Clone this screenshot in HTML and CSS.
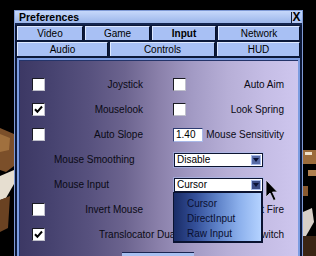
FILE: index.html
```html
<!DOCTYPE html>
<html>
<head>
<meta charset="utf-8">
<link rel="stylesheet" href="styles.css">
</head>
<body>
<svg class="backdrop" width="316" height="256" viewBox="0 0 316 256">
  <path d="M0 128 L14 134 L14 166 L6 172 L0 170 Z" fill="#7b4f2a"/>
  <path d="M0 134 L10 138 L9 150 L0 152 Z" fill="#a0703e"/>
  <path d="M0 176 L14 170 L14 184 L6 198 L0 200 Z" fill="#e6ded0"/>
  <path d="M0 200 L10 196 L8 228 L0 232 Z" fill="#6a4222"/>
  <rect x="303" y="150" width="13" height="14" fill="#9c6c3c"/>
  <rect x="305" y="152" width="7" height="3" fill="#f0e0c8"/>
  <rect x="308" y="170" width="8" height="6" fill="#b08050"/>
  <rect x="303" y="186" width="5" height="10" fill="#8a5a30"/>
  <path d="M303 212 L312 208 L314 222 L306 236 L303 236 Z" fill="#d8d0c8"/>
  <rect x="303" y="236" width="13" height="20" fill="#3a2414"/>
</svg>

<div class="window">
  <div class="titlebar">
    <span class="title">Preferences</span>
    <span class="close">X</span>
  </div>
  <div class="tabbody">
    <div class="tabs">
      <div class="tab tab-video">Video</div>
      <div class="tab tab-game">Game</div>
      <div class="tab tab-input active">Input</div>
      <div class="tab tab-network">Network</div>
    </div>
    <div class="tabs">
      <div class="tab tab-audio">Audio</div>
      <div class="tab tab-controls">Controls</div>
      <div class="tab tab-hud">HUD</div>
    </div>
    <div class="panel">
      <div class="row">
        <div class="half"><span class="check"></span><span class="label">Joystick</span></div>
        <div class="half"><span class="check"></span><span class="label">Auto Aim</span></div>
      </div>
      <div class="row">
        <div class="half"><span class="check"><svg class="tick" width="9" height="9" viewBox="0 0 9 9"><path d="M1 4.2 L3.4 6.8 L8 1.5" fill="none" stroke="#000" stroke-width="2"/></svg></span><span class="label">Mouselook</span></div>
        <div class="half"><span class="check"></span><span class="label">Look Spring</span></div>
      </div>
      <div class="row">
        <div class="half"><span class="check"></span><span class="label">Auto Slope</span></div>
        <div class="half"><span class="num">1.40</span><span class="label">Mouse Sensitivity</span></div>
      </div>
      <div class="row select-row">
        <span class="select-label">Mouse Smoothing</span>
        <div class="select"><span>Disable</span><span class="arrow"></span></div>
      </div>
      <div class="row select-row">
        <span class="select-label">Mouse Input</span>
        <div class="select open"><span>Cursor</span><span class="arrow"></span>
          <div class="options">
            <div class="option">Cursor</div>
            <div class="option">DirectInput</div>
            <div class="option">Raw Input</div>
          </div>
        </div>
      </div>
      <div class="row">
        <div class="half"><span class="check"></span><span class="label">Invert Mouse</span></div>
        <div class="half"><span class="check"></span><span class="label">Alt Fire</span></div>
      </div>
      <div class="row">
        <div class="half"><span class="check"><svg class="tick" width="9" height="9" viewBox="0 0 9 9"><path d="M1 4.2 L3.4 6.8 L8 1.5" fill="none" stroke="#000" stroke-width="2"/></svg></span><span class="label label-long">Translocator Dual</span></div>
        <div class="half"><span class="check"></span><span class="label">Switch</span></div>
      </div>
      <div class="button"></div>
    </div>
  </div>
</div>

<svg class="pointer" width="14" height="23" viewBox="0 0 14 23">
  <path d="M1 1 V18 L5 14 L8.5 21.5 L11 20.5 L7.5 13 H12.5 Z" fill="#000" stroke="#d8d4f0" stroke-width="0.8"/>
</svg>
</body>
</html>
```

FILE: styles.css
```css
html, body {
  margin: 0;
  padding: 0;
}

body {
  width: 316px;
  height: 256px;
  overflow: hidden;
  position: relative;
  background: #000;
  font-family: "Liberation Sans", Arial, sans-serif;
  font-size: 10px;
  color: #0a0a14;
}

.backdrop {
  position: absolute;
  left: 0;
  top: 0;
}

.window {
  position: absolute;
  left: 14px;
  top: 10px;
  width: 289px;
  height: 260px;
  box-sizing: border-box;
  border: 1px solid #7f9ad6;
  background: #0c1838;
}

.titlebar {
  height: 12px;
  display: flex;
  align-items: center;
  justify-content: space-between;
  padding: 0 1px 0 4px;
  background: linear-gradient(#c6d8fb, #9cb6ea);
  border-bottom: 2px solid #14254f;
}

.title {
  font-weight: bold;
  font-size: 10.5px;
  color: #000;
}

.close {
  width: 10px;
  height: 11px;
  box-sizing: border-box;
  border-left: 1px solid #0c1838;
  background: #b4c8f4;
  font-weight: bold;
  font-size: 12px;
  line-height: 11px;
  text-align: center;
  color: #000;
}

.tabbody {
  padding: 1px 2px 0;
}

.tabs {
  display: flex;
  gap: 2px;
  height: 14px;
}

.tabs + .tabs {
  margin-top: 2px;
}

.tab {
  box-sizing: border-box;
  display: flex;
  align-items: center;
  justify-content: center;
  background: #a8c0f4;
  border-top: 1px solid #dde8ff;
  border-left: 1px solid #dde8ff;
  border-right: 1px solid #06102a;
  color: #000;
}

.tab.active {
  font-weight: bold;
}

.tab-video { width: 66px; }
.tab-game { width: 65px; }
.tab-input { width: 64px; }
.tab-network { width: 82px; }
.tab-audio { width: 91px; }
.tab-controls { width: 105px; }
.tab-hud { width: 83px; }

.panel {
  position: relative;
  margin-top: 2px;
  height: 220px;
  box-sizing: border-box;
  border: 2px solid #7c9ce0;
  border-bottom: none;
  box-shadow: inset 1px 1px 0 #24346a;
  background: linear-gradient(90deg, #3c3864 0%, #474370 12%, #57517e 25%, #6c648f 38%, #8a80aa 50%, #a29ac4 62%, #b7afd7 75%, #c5bde5 88%, #cec6ee 100%);
  padding: 12px 0 0 13px;
}

.row {
  display: flex;
  align-items: center;
  height: 25px;
}

.half {
  width: 111px;
  flex: none;
  display: flex;
  align-items: center;
}

.half + .half {
  margin-left: 30px;
}

.label {
  flex: 1;
  text-align: right;
  white-space: nowrap;
}

.label-long {
  flex: none;
  text-align: left;
  margin-left: 54px;
}

.check {
  width: 13px;
  height: 13px;
  flex: none;
  box-sizing: border-box;
  background: #fff;
  border: 1px solid;
  border-color: #1a1a22 #c0c0cc #c0c0cc #1a1a22;
  display: flex;
  align-items: center;
  justify-content: center;
}

.num {
  width: 30px;
  height: 14px;
  flex: none;
  box-sizing: border-box;
  background: #fff;
  border: 1px solid;
  border-color: #2c3a70 #a8b8e8 #a8b8e8 #2c3a70;
  padding-left: 2px;
  line-height: 12px;
  color: #000;
}

.select-row {
  padding-left: 22px;
}

.select-label {
  width: 120px;
  flex: none;
  white-space: nowrap;
}

.select {
  position: relative;
  width: 89px;
  height: 14px;
  flex: none;
  box-sizing: border-box;
  background: #fff;
  border: 1px solid #0c1430;
  box-shadow: 0 0 0 1px rgba(170, 190, 240, 0.55);
  display: flex;
  align-items: center;
  justify-content: space-between;
  padding-left: 2px;
  color: #000;
}

.arrow {
  width: 10px;
  height: 10px;
  box-sizing: border-box;
  margin-right: 1px;
  background: #586ca6;
  border: 1px solid #a8bcec;
  display: flex;
  align-items: center;
  justify-content: center;
}

.arrow::after {
  content: "";
  border-left: 3px solid transparent;
  border-right: 3px solid transparent;
  border-top: 4px solid #0a1236;
}

.select.open .arrow {
  background: #3a4a84;
}

.options {
  position: absolute;
  left: -2px;
  top: 13px;
  width: 90px;
  height: 51px;
  box-sizing: border-box;
  background: linear-gradient(90deg, #1a2c66 0%, #34509a 25%, #5e82c8 50%, #8cb0ec 75%, #b4d2ff 100%);
  border: 1px solid #0a1230;
  border-right-width: 2px;
  border-bottom-width: 2px;
  padding: 3px 0 0 13px;
}

.option {
  height: 15px;
  line-height: 15px;
  color: #0a1030;
  white-space: nowrap;
}

.button {
  margin: 6px 0 0 90px;
  width: 72px;
  height: 10px;
  background: #a8c0f0;
  box-shadow: 0 -1px 0 #1a2450;
}

.pointer {
  position: absolute;
  left: 265px;
  top: 179px;
}
```
